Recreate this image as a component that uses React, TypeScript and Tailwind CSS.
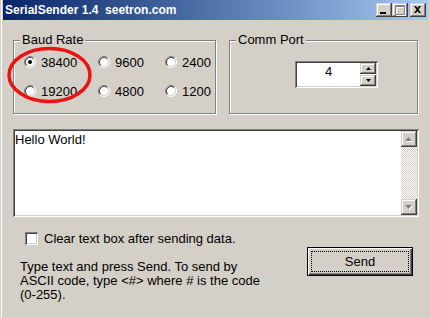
import React from 'react';

const raised =
  'shadow-[inset_-1px_-1px_0_#404040,inset_1px_1px_0_#d4d0c8,inset_-2px_-2px_0_#808080,inset_2px_2px_0_#fff]';
const sunken =
  'shadow-[inset_1px_1px_0_#808080,inset_-1px_-1px_0_#fff,inset_2px_2px_0_#404040,inset_-2px_-2px_0_#d4d0c8]';

function Radio({ checked }: { checked?: boolean }) {
  return (
    <svg width="12" height="12" viewBox="0 0 12 12" className="shrink-0">
      <circle cx="6" cy="6" r="5" fill="#fff" />
      <path d="M2.11 9.89A5.5 5.5 0 0 1 9.89 2.11" fill="none" stroke="#808080" />
      <path d="M9.89 2.11A5.5 5.5 0 0 1 2.11 9.89" fill="none" stroke="#fff" />
      <path d="M2.82 9.18A4.5 4.5 0 0 1 9.18 2.82" fill="none" stroke="#404040" />
      <path d="M9.18 2.82A4.5 4.5 0 0 1 2.82 9.18" fill="none" stroke="#d4d0c8" />
      {checked && <circle cx="6" cy="6" r="2" fill="#000" />}
    </svg>
  );
}

function RadioItem({ label, checked }: { label: string; checked?: boolean }) {
  return (
    <div className="flex h-[16px] items-center gap-[5px]">
      <Radio checked={checked} />
      <span className="leading-[15px]">{label}</span>
    </div>
  );
}

function TitleButton({ kind }: { kind: 'min' | 'max' | 'close' }) {
  return (
    <div className={`flex h-[14px] w-[16px] items-center justify-center bg-[#d4d0c8] ${raised}`}>
      <svg width="16" height="14" viewBox="0 0 16 14">
        {kind === 'min' && <rect x="4" y="9" width="6" height="2" fill="#000" />}
        {kind === 'max' && (
          <g fill="none">
            <path d="M4.5 4.5h9v8h-9z M4.5 3.5h9" stroke="#fff" />
            <path d="M3.5 3.5h9v8h-9z M3.5 2.5h9" stroke="#808080" />
          </g>
        )}
        {kind === 'close' && (
          <path d="M4 3l2 0 1.5 2 1.5-2 2 0-2.5 3.5 2.5 3.5-2 0-1.5-2-1.5 2-2 0 2.5-3.5z" fill="#000" />
        )}
      </svg>
    </div>
  );
}

function SpinButton({ up }: { up?: boolean }) {
  return (
    <div className={`flex h-[11px] w-[16px] items-center justify-center bg-[#d4d0c8] ${raised}`}>
      <svg width="5" height="3" viewBox="0 0 5 3">
        <path d={up ? 'M2.5 0L5 3H0z' : 'M0 0h5L2.5 3z'} fill="#000" />
      </svg>
    </div>
  );
}

function ScrollButton({ up }: { up?: boolean }) {
  return (
    <div className={`flex h-[16px] w-[16px] items-center justify-center bg-[#d4d0c8] ${raised}`}>
      <svg width="8" height="5" viewBox="0 0 8 5">
        <path d={up ? 'M4.5 1L8 5H1z' : 'M1 1h7L4.5 5z'} fill="#fff" />
        <path d={up ? 'M3.5 0L7 4H0z' : 'M0 0h7L3.5 4z'} fill="#808080" />
      </svg>
    </div>
  );
}

function Checkbox() {
  return <div className={`h-[13px] w-[13px] shrink-0 bg-white ${sunken}`} />;
}

export default function App() {
  return (
    <div className="h-[318px] w-[430px] overflow-hidden bg-[#d4d0c8] font-['Liberation_Sans',Arial,sans-serif] text-[13px] text-black">
      <div className="ml-px h-full border-l border-white pl-px pr-[2px]">
        {/* title bar */}
        <div className="flex h-[20px] items-center bg-linear-to-r from-[#0a246a] to-[#a6caf0] pl-[2px] pr-[2px]">
          <span className="whitespace-pre text-[12px] font-bold leading-none text-white">
            SerialSender 1.4  seetron.com
          </span>
          <div className="ml-auto flex">
            <TitleButton kind="min" />
            <TitleButton kind="max" />
            <div className="w-[2px]" />
            <TitleButton kind="close" />
          </div>
        </div>

        <div className="w-[406px] pl-[10px] box-content">
          {/* group boxes */}
          <div className="mt-[20px] flex gap-[13px]">
            <div className="relative h-[74px] w-[203px] border border-[#808080] shadow-[inset_1px_1px_0_#fff,1px_1px_0_#fff]">
              <span className="absolute left-[6px] top-[-9px] bg-[#d4d0c8] px-[2px] leading-[15px]">
                Baud Rate
              </span>
              <div className="grid grid-cols-[74px_67px_1fr] gap-y-[13px] pl-[10px] pt-[13px]">
                <RadioItem label="38400" checked />
                <RadioItem label="9600" />
                <RadioItem label="2400" />
                <RadioItem label="19200" />
                <RadioItem label="4800" />
                <RadioItem label="1200" />
              </div>
              <svg
                className="pointer-events-none absolute left-[-7px] top-[6px] overflow-visible"
                width="85"
                height="56"
                viewBox="0 0 85 56"
              >
                <ellipse cx="42.5" cy="28" rx="40.5" ry="26.5" fill="none" stroke="#ee1111" strokeWidth="3.5" />
              </svg>
            </div>

            <div className="relative h-[74px] w-[189px] border border-[#808080] shadow-[inset_1px_1px_0_#fff,1px_1px_0_#fff]">
              <span className="absolute left-[6px] top-[-9px] bg-[#d4d0c8] px-[2px] leading-[15px]">
                Comm Port
              </span>
              <div className={`ml-[65px] mt-[20px] flex h-[27px] w-[83px] bg-white p-[2px] ${sunken}`}>
                <div className="flex flex-1 justify-center pt-px leading-[15px]">4</div>
                <div className="flex flex-col gap-px">
                  <SpinButton up />
                  <SpinButton />
                </div>
              </div>
            </div>
          </div>

          {/* text area */}
          <div className={`mt-[15px] flex h-[88px] w-[406px] bg-white p-[2px] ${sunken}`}>
            <div className="flex-1 pt-px leading-[15px]">Hello World!</div>
            <div className="flex w-[16px] flex-col bg-[image:repeating-conic-gradient(#fff_0_25%,#d4d0c8_0_50%)] bg-[length:2px_2px]">
              <ScrollButton up />
              <div className="flex-1" />
              <ScrollButton />
            </div>
          </div>

          {/* bottom */}
          <div className="mt-[15px] flex w-[406px]">
            <div>
              <label className="ml-[12px] flex h-[13px] items-center gap-[6px]">
                <Checkbox />
                <span className="leading-[15px]">Clear text box after sending data.</span>
              </label>
              <p className="ml-[7px] mt-[15px] leading-[14px]">
                Type text and press Send. To send by
                <br />
                ASCII code, type &lt;#&gt; where # is the code
                <br />
                (0-255).
              </p>
            </div>
            <button
              className={`ml-auto mr-[6px] mt-[15px] h-[29px] w-[106px] border border-black bg-[#d4d0c8] p-[3px] shadow-[inset_1px_1px_0_#fff,inset_-1px_-1px_0_#404040,inset_-2px_-2px_0_#808080]`}
            >
              <div className="flex h-full w-full items-center justify-center border border-dotted border-black leading-[15px]">
                Send
              </div>
            </button>
          </div>
        </div>
      </div>
    </div>
  );
}
